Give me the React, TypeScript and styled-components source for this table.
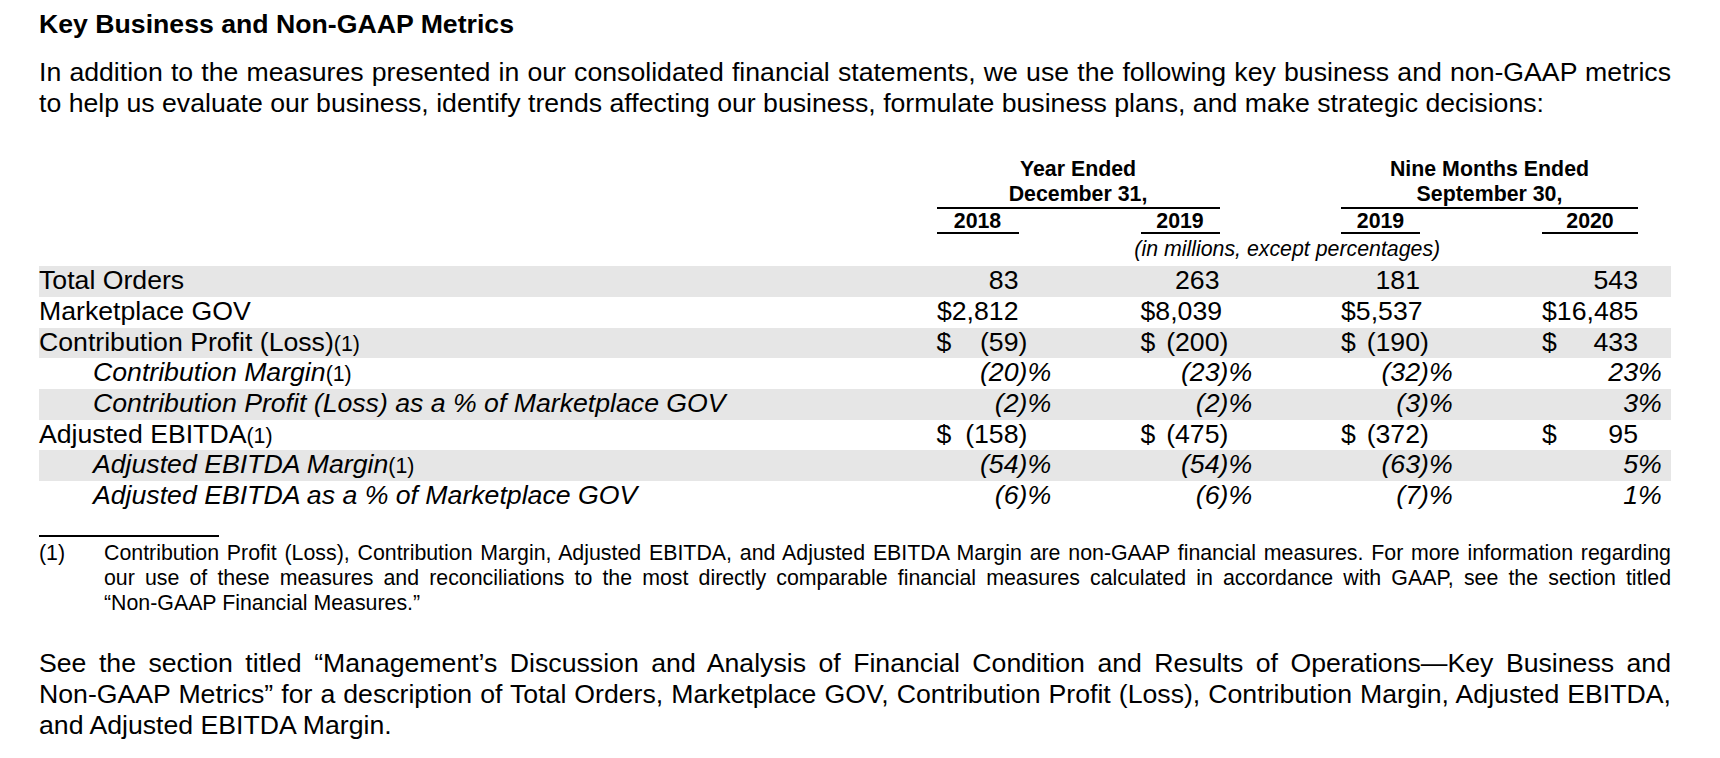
import React from "react";
import styled, { createGlobalStyle } from "styled-components";

const GlobalStyle = createGlobalStyle`
  html, body {
    margin: 0;
    padding: 0;
    background: #ffffff;
  }
  body {
    font-family: "Liberation Sans", Arial, Helvetica, sans-serif;
    color: #000000;
  }
`;

const COLS = "897.5px 115px 89px 112px 88.5px 112px 89px 129px";
const BODY = "26.67px";
const SMALL = "21.33px";
const WJ = "\u2060";

const Page = styled.div`
  width: 1632px;
  padding: 9.4px 49px 0 39px;
`;

const Title = styled.h1`
  margin: 0;
  font-size: ${BODY};
  line-height: 30.67px;
  font-weight: 700;
`;

const Para = styled.p<{ $top: number }>`
  margin: ${(p) => p.$top}px 0 0;
  font-size: ${BODY};
  line-height: 30.67px;
  text-align: justify;
`;

const Table = styled.div`
  margin-top: 38.4px;
`;

const HeadGrid = styled.div`
  display: grid;
  grid-template-columns: ${COLS};
  font-size: ${SMALL};
  line-height: 23px;
`;

const GroupHead = styled.div<{ $from: number }>`
  grid-column: ${(p) => p.$from} / span 3;
  margin-right: 33px;
  padding-bottom: 0;
  border-bottom: 2px solid #000;
  text-align: center;
  font-weight: 700;
  line-height: 24.7px;
`;

const YearGrid = styled(HeadGrid)`
  margin-top: 1.4px;
`;

const YearCell = styled.div<{ $col: number }>`
  grid-column: ${(p) => p.$col};
  margin-right: 33px;
  border-bottom: 2px solid #000;
  text-align: center;
  font-weight: 700;
  line-height: 22px;
`;

const UnitGrid = styled(HeadGrid)`
  margin-top: 4px;
`;

const UnitNote = styled.div`
  grid-column: 2 / span 7;
  margin-right: 33px;
  text-align: center;
  font-style: italic;
`;

const Rows = styled.div`
  margin-top: 5.4px;
`;

const Row = styled.div<{ $shaded?: boolean }>`
  display: grid;
  grid-template-columns: ${COLS};
  height: 30.67px;
  box-sizing: border-box;
  padding-bottom: 2.17px;
  background: ${(p) => (p.$shaded ? "#e6e6e6" : "transparent")};
  font-size: ${BODY};
  line-height: 28.5px;
  white-space: nowrap;
`;

const Label = styled.div<{ $indent?: boolean; $italic?: boolean }>`
  grid-column: 1;
  padding-left: ${(p) => (p.$indent ? "54px" : "0")};
  font-style: ${(p) => (p.$italic ? "italic" : "normal")};
`;

const Note = styled.span`
  font-size: ${SMALL};
  font-style: normal;
  line-height: 1;
`;

const ValueCell = styled.div<{ $col: number; $italic?: boolean }>`
  grid-column: ${(p) => p.$col};
  display: flex;
  font-style: ${(p) => (p.$italic ? "italic" : "normal")};
`;

const Dollar = styled.span`
  flex: none;
`;

const Amount = styled.span`
  flex: 1;
  text-align: right;
`;

const Hang = styled.span`
  flex: none;
  width: 33px;
  text-align: left;
`;

const FootRule = styled.div`
  margin-top: 23.1px;
  width: 180px;
  height: 2px;
  background: #000;
`;

const Footnote = styled.div`
  display: flex;
  margin-top: 4.3px;
  font-size: ${SMALL};
  line-height: 25px;
`;

const FnMark = styled.div`
  flex: none;
  width: 65px;
`;

const FnText = styled.div`
  flex: 1;
  text-align: justify;
`;

type Val = { d?: boolean; a: string; h?: string };

type RowData = {
  label: string;
  note?: boolean;
  sub?: boolean;
  shaded?: boolean;
  vals: Val[];
};

const rows: RowData[] = [
  {
    label: "Total Orders",
    shaded: true,
    vals: [{ a: "83" }, { a: "263" }, { a: "181" }, { a: "543" }],
  },
  {
    label: "Marketplace GOV",
    vals: [{ a: "$2,812" }, { a: "$8,039" }, { a: "$5,537" }, { a: "$16,485" }],
  },
  {
    label: "Contribution Profit (Loss)",
    note: true,
    shaded: true,
    vals: [
      { d: true, a: "(59", h: ")" },
      { d: true, a: "(200", h: ")" },
      { d: true, a: "(190", h: ")" },
      { d: true, a: "433" },
    ],
  },
  {
    label: "Contribution Margin",
    note: true,
    sub: true,
    vals: [
      { a: "(20", h: ")%" },
      { a: "(23", h: ")%" },
      { a: "(32", h: ")%" },
      { a: "23", h: "%" },
    ],
  },
  {
    label: "Contribution Profit (Loss) as a % of Marketplace GOV",
    sub: true,
    shaded: true,
    vals: [
      { a: "(2", h: ")%" },
      { a: "(2", h: ")%" },
      { a: "(3", h: ")%" },
      { a: "3", h: "%" },
    ],
  },
  {
    label: "Adjusted EBITDA",
    note: true,
    vals: [
      { d: true, a: "(158", h: ")" },
      { d: true, a: "(475", h: ")" },
      { d: true, a: "(372", h: ")" },
      { d: true, a: "95" },
    ],
  },
  {
    label: "Adjusted EBITDA Margin",
    note: true,
    sub: true,
    shaded: true,
    vals: [
      { a: "(54", h: ")%" },
      { a: "(54", h: ")%" },
      { a: "(63", h: ")%" },
      { a: "5", h: "%" },
    ],
  },
  {
    label: "Adjusted EBITDA as a % of Marketplace GOV",
    sub: true,
    vals: [
      { a: "(6", h: ")%" },
      { a: "(6", h: ")%" },
      { a: "(7", h: ")%" },
      { a: "1", h: "%" },
    ],
  },
];

const valueCols = [2, 4, 6, 8];

export default function App() {
  return (
    <>
      <GlobalStyle />
      <Page>
        <Title>Key Business and Non-GAAP Metrics</Title>
        <Para $top={17.3}>
          In addition to the measures presented in our consolidated financial statements, we use the
          following key business and non-GAAP metrics to help us evaluate our business, identify trends
          affecting our business, formulate business plans, and make strategic decisions:
        </Para>

        <Table>
          <HeadGrid>
            <GroupHead $from={2}>
              Year Ended
              <br />
              December 31,
            </GroupHead>
            <GroupHead $from={6}>
              Nine Months Ended
              <br />
              September 30,
            </GroupHead>
          </HeadGrid>
          <YearGrid>
            <YearCell $col={2}>2018</YearCell>
            <YearCell $col={4}>2019</YearCell>
            <YearCell $col={6}>2019</YearCell>
            <YearCell $col={8}>2020</YearCell>
          </YearGrid>
          <UnitGrid>
            <UnitNote>(in millions, except percentages)</UnitNote>
          </UnitGrid>

          <Rows>
            {rows.map((r) => (
              <Row key={r.label} $shaded={r.shaded}>
                <Label $indent={r.sub} $italic={r.sub}>
                  {r.label}
                  {r.note && <Note>(1)</Note>}
                </Label>
                {r.vals.map((v, i) => (
                  <ValueCell key={i} $col={valueCols[i]} $italic={r.sub}>
                    {v.d && <Dollar>$</Dollar>}
                    <Amount>{v.a}</Amount>
                    <Hang>{v.h ?? ""}</Hang>
                  </ValueCell>
                ))}
              </Row>
            ))}
          </Rows>
        </Table>

        <FootRule />
        <Footnote>
          <FnMark>(1)</FnMark>
          <FnText>
            {`Contribution Profit (Loss), Contribution Margin, Adjusted EBITDA, and Adjusted EBITDA Margin are non-GAAP financial measures. For more information regarding our use of these measures and reconciliations to the most directly comparable financial measures calculated in accordance with GAAP, see the section titled “Non-${WJ}GAAP Financial Measures.”`}
          </FnText>
        </Footnote>

        <Para $top={32.5}>
          {`See the section titled “Management’s Discussion and Analysis of Financial Condition and Results of Operations—Key Business and Non-${WJ}GAAP Metrics” for a description of Total Orders, Marketplace GOV, Contribution Profit (Loss), Contribution Margin, Adjusted EBITDA, and Adjusted EBITDA Margin.`}
        </Para>
      </Page>
    </>
  );
}
